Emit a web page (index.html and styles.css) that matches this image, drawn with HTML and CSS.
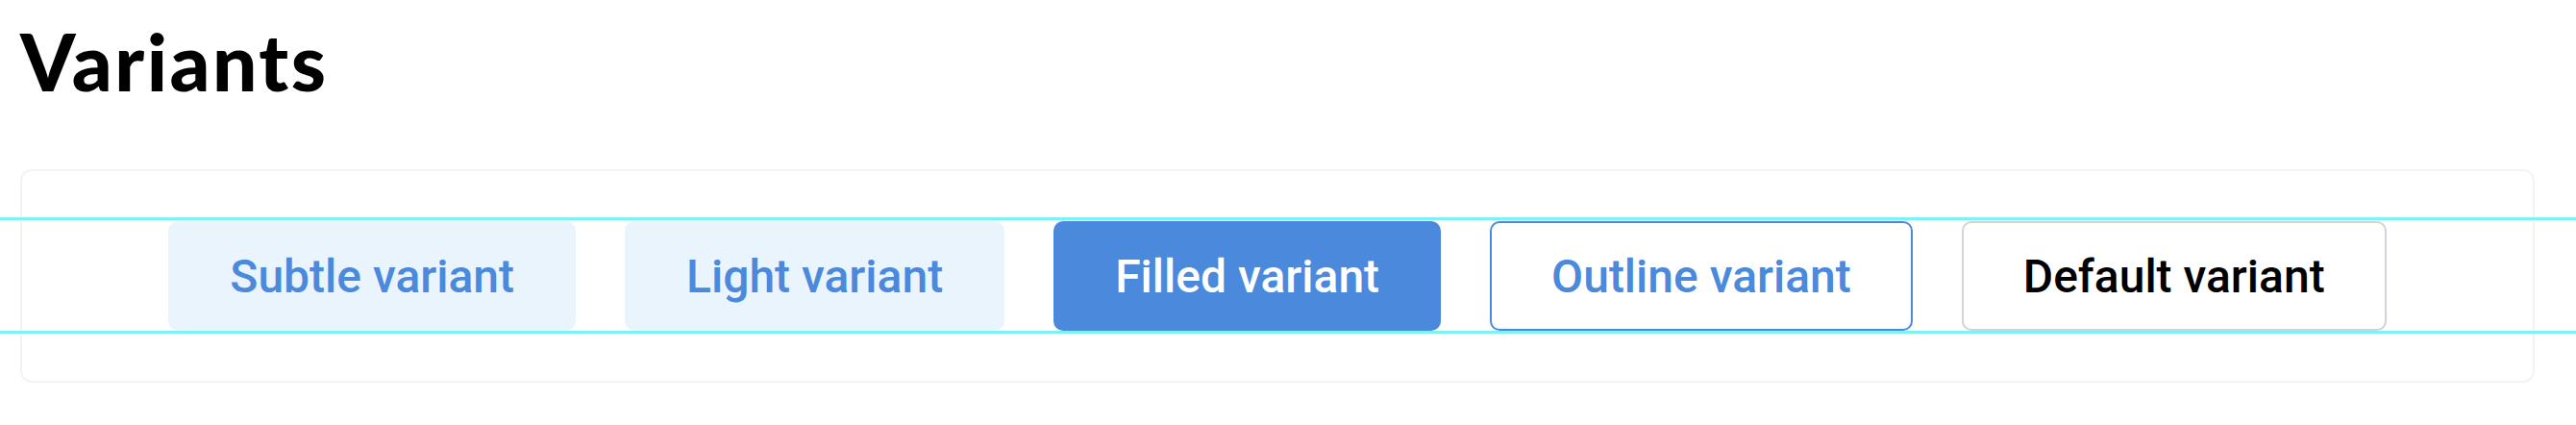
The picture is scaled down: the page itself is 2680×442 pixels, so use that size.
FILE: index.html
```html
<!DOCTYPE html>
<html lang="en">
<head>
<meta charset="utf-8">
<title>Variants</title>
<link rel="stylesheet" href="styles.css">
</head>
<body>
<h1 class="title">Variants</h1>
<section class="card">
  <div class="row">
    <button class="btn btn-subtle">Subtle variant</button>
    <button class="btn btn-light">Light variant</button>
    <button class="btn btn-filled">Filled variant</button>
    <button class="btn btn-outline">Outline variant</button>
    <button class="btn btn-default">Default variant</button>
  </div>
</section>
<div class="guide guide-top"></div>
<div class="guide guide-bottom"></div>
</body>
</html>
```

FILE: styles.css
```css
html, body {
  margin: 0;
  padding: 0;
  background: #ffffff;
}
body {
  position: relative;
  width: 2680px;
  height: 442px;
  overflow: hidden;
}
.title {
  margin: 0;
  padding: 15px 0 0 21px;
  height: 158px;
  box-sizing: border-box;
  font-family: "Lato", "Noto Sans", sans-serif;
  font-weight: 900;
  font-size: 82px;
  line-height: 96px;
  color: #000;
  letter-spacing: 2.5px;
}
.card {
  margin: 18px 43px 0 21px;
  border: 2px solid #f1f3f5;
  border-radius: 12px;
  padding: 52px 0;
}
.row {
  display: flex;
  justify-content: center;
  gap: 51px;
}
.btn {
  height: 114px;
  padding: 0 62px;
  border-radius: 10px;
  border: 2px solid transparent;
  font-family: "Roboto", "Inter", sans-serif;
  font-weight: 500;
  font-size: 48px;
  color: #4a89dc;
  background: transparent;
  cursor: pointer;
}
.btn-subtle, .btn-light {
  background: #eaf4fd;
  border-color: #eaf4fd;
}
.btn-filled {
  background: #4a89dc;
  border-color: #4a89dc;
  color: #ffffff;
}
.btn-outline {
  background: #ffffff;
  border-color: #4a89dc;
}
.btn-default {
  background: #ffffff;
  border-color: #ced4da;
  color: #000000;
}
.guide {
  position: absolute;
  left: 0;
  width: 100%;
  height: 3px;
  background: #7ef1f4;
}
.guide-top { top: 226px; }
.guide-bottom { top: 344px; }
```
